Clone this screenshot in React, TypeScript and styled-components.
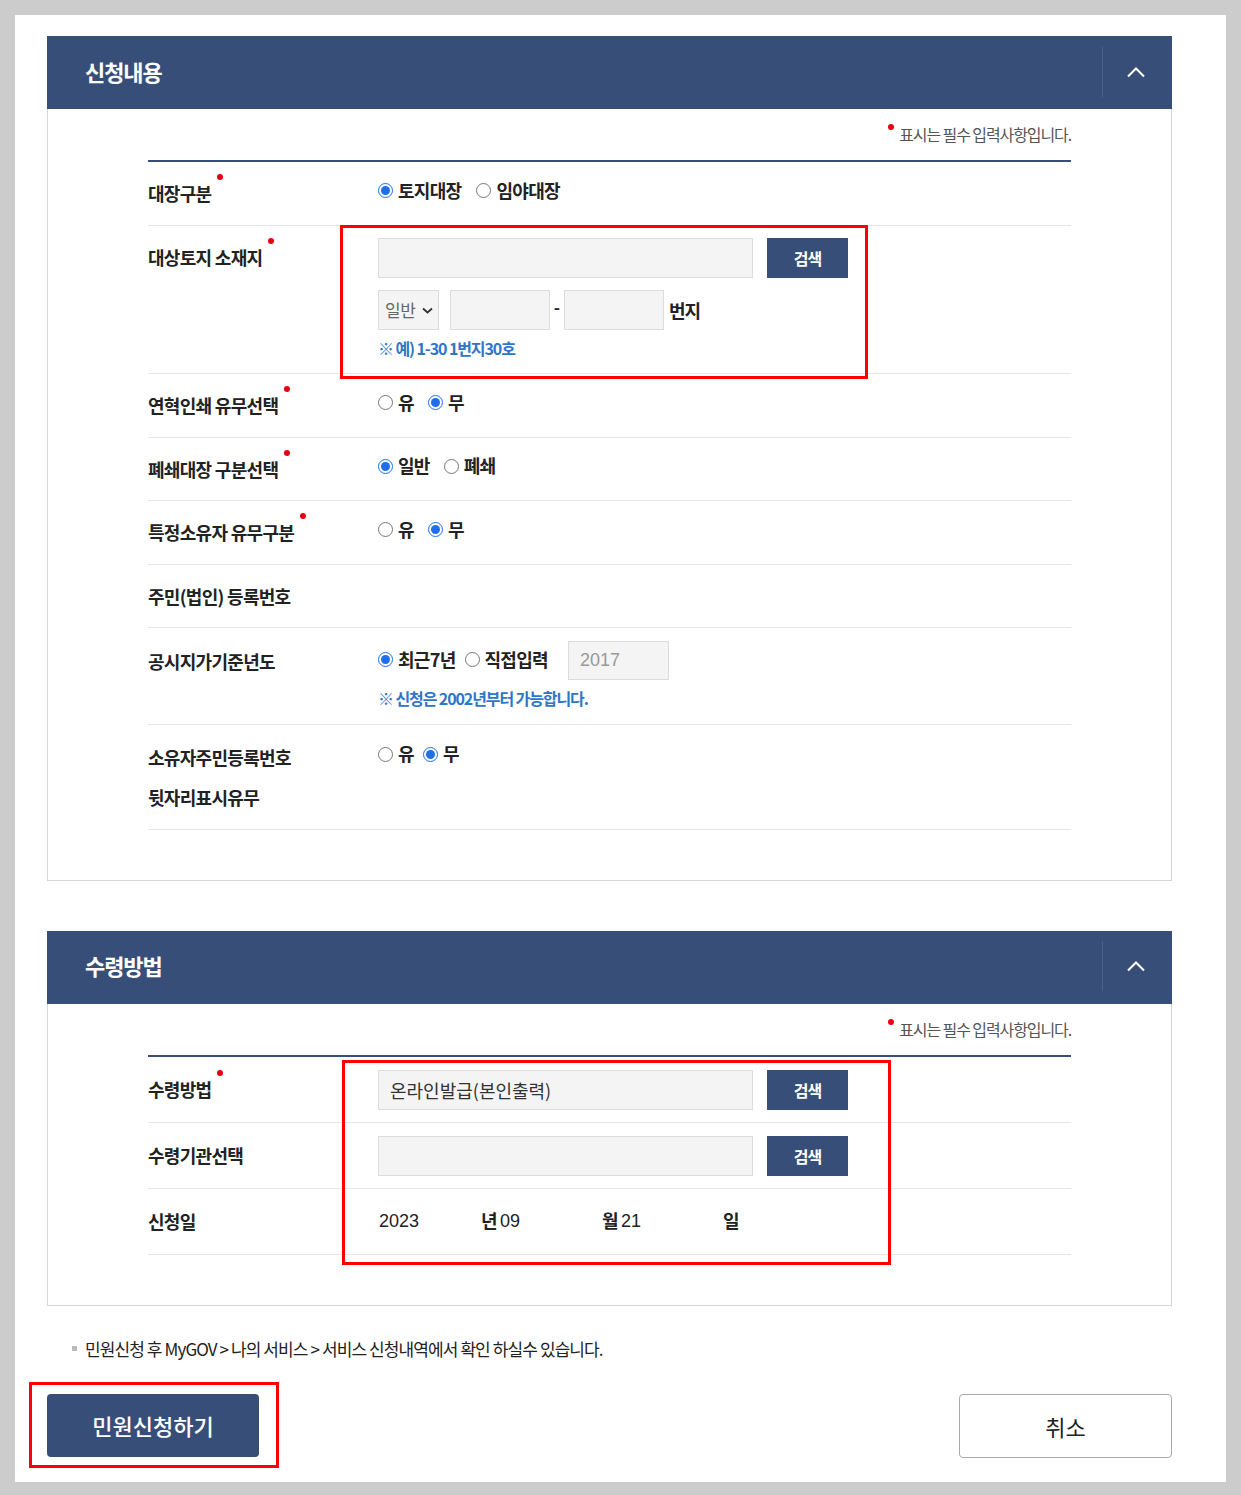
import React from "react";
import styled, { createGlobalStyle } from "styled-components";

const NAVY = "#374f78";
const FONT = `"Noto Sans CJK KR", "Noto Sans", sans-serif`;
const LATIN = `"Liberation Sans", "Noto Sans CJK KR", sans-serif`;

const GlobalStyle = createGlobalStyle`
  html, body {
    margin: 0;
    padding: 0;
    background: #cccccc;
  }
  body {
    font-family: ${FONT};
    color: #222;
  }
  * {
    box-sizing: border-box;
  }
`;

const ChevronUp = () => (
  <svg width="20" height="12" viewBox="0 0 20 12" fill="none">
    <polyline points="2,10.5 10,2.5 18,10.5" stroke="#fff" strokeWidth="2" />
  </svg>
);

const ChevronDown = () => (
  <svg width="11" height="7" viewBox="0 0 11 7" fill="none">
    <polyline points="1,1.5 5.5,5.5 10,1.5" stroke="#333" strokeWidth="1.8" />
  </svg>
);

const Required = () => <ReqDot aria-label="필수" />;

const App = () => {
  return (
    <>
      <GlobalStyle />
      <Page>
        <Section>
          <SectionHeader>
            <SectionTitle>신청내용</SectionTitle>
            <ToggleButton type="button" aria-label="접기">
              <ChevronUp />
            </ToggleButton>
          </SectionHeader>
          <SectionBody>
            <RequiredNote>
              <Required />
              표시는 필수 입력사항입니다.
            </RequiredNote>
            <FormTable>
              <Row>
                <Label>
                  대장구분
                  <Required />
                </Label>
                <Value>
                  <RadioGroup>
                    <RadioLabel>
                      <Radio name="ledger" defaultChecked />
                      토지대장
                    </RadioLabel>
                    <RadioLabel>
                      <Radio name="ledger" />
                      임야대장
                    </RadioLabel>
                  </RadioGroup>
                </Value>
              </Row>

              <Row>
                <Label>
                  대상토지 소재지
                  <Required />
                </Label>
                <Value>
                  <Line>
                    <TextInput $w={375} />
                    <SearchButton type="button">검색</SearchButton>
                  </Line>
                  <Line $top={12}>
                    <SelectBox>
                      <Select defaultValue="일반">
                        <option>일반</option>
                        <option>산</option>
                      </Select>
                      <SelectIcon>
                        <ChevronDown />
                      </SelectIcon>
                    </SelectBox>
                    <TextInput $w={100} $left={11} />
                    <Dash>-</Dash>
                    <TextInput $w={100} />
                    <Unit>번지</Unit>
                  </Line>
                  <Hint>※ 예) 1-30 1번지30호</Hint>
                </Value>
                <Highlight $left={192} $top={-1} $w={528} $h={154} />
              </Row>

              <Row>
                <Label>
                  연혁인쇄 유무선택
                  <Required />
                </Label>
                <Value>
                  <RadioGroup $gap={14}>
                    <RadioLabel>
                      <Radio name="history" />유
                    </RadioLabel>
                    <RadioLabel>
                      <Radio name="history" defaultChecked />무
                    </RadioLabel>
                  </RadioGroup>
                </Value>
              </Row>

              <Row>
                <Label>
                  폐쇄대장 구분선택
                  <Required />
                </Label>
                <Value>
                  <RadioGroup $gap={14}>
                    <RadioLabel>
                      <Radio name="closed" defaultChecked />
                      일반
                    </RadioLabel>
                    <RadioLabel>
                      <Radio name="closed" />
                      폐쇄
                    </RadioLabel>
                  </RadioGroup>
                </Value>
              </Row>

              <Row>
                <Label>
                  특정소유자 유무구분
                  <Required />
                </Label>
                <Value>
                  <RadioGroup $gap={14}>
                    <RadioLabel>
                      <Radio name="owner" />유
                    </RadioLabel>
                    <RadioLabel>
                      <Radio name="owner" defaultChecked />무
                    </RadioLabel>
                  </RadioGroup>
                </Value>
              </Row>

              <Row>
                <Label>주민(법인) 등록번호</Label>
                <Value />
              </Row>

              <Row>
                <Label $drop={2}>공시지가기준년도</Label>
                <Value>
                  <Line>
                    <RadioGroup $gap={9} $pb={3}>
                      <RadioLabel>
                        <Radio name="year" defaultChecked />
                        최근7년
                      </RadioLabel>
                      <RadioLabel>
                        <Radio name="year" />
                        직접입력
                      </RadioLabel>
                    </RadioGroup>
                    <YearInput defaultValue="2017" readOnly />
                  </Line>
                  <Hint>※ 신청은 2002년부터 가능합니다.</Hint>
                </Value>
              </Row>

              <Row $roomy>
                <Label>
                  소유자주민등록번호
                  <br />
                  뒷자리표시유무
                </Label>
                <Value>
                  <RadioGroup $gap={9}>
                    <RadioLabel>
                      <Radio name="rrn" />유
                    </RadioLabel>
                    <RadioLabel>
                      <Radio name="rrn" defaultChecked />무
                    </RadioLabel>
                  </RadioGroup>
                </Value>
              </Row>
            </FormTable>
          </SectionBody>
        </Section>

        <Section>
          <SectionHeader>
            <SectionTitle>수령방법</SectionTitle>
            <ToggleButton type="button" aria-label="접기">
              <ChevronUp />
            </ToggleButton>
          </SectionHeader>
          <SectionBody>
            <RequiredNote>
              <Required />
              표시는 필수 입력사항입니다.
            </RequiredNote>
            <FormTable>
              <Row $roomy>
                <Label>
                  수령방법
                  <Required />
                </Label>
                <Value>
                  <Line>
                    <TextInput $w={375} defaultValue="온라인발급(본인출력)" readOnly />
                    <SearchButton type="button">검색</SearchButton>
                  </Line>
                </Value>
              </Row>
              <Row $roomy>
                <Label>수령기관선택</Label>
                <Value>
                  <Line>
                    <TextInput $w={375} />
                    <SearchButton type="button">검색</SearchButton>
                  </Line>
                </Value>
              </Row>
              <Row $roomy>
                <Label>신청일</Label>
                <Value>
                  <Line>
                    <DateValue>2023</DateValue>
                    <DateUnit>년</DateUnit>
                    <DateValue>09</DateValue>
                    <DateUnit>월</DateUnit>
                    <DateValue>21</DateValue>
                    <DateUnit>일</DateUnit>
                  </Line>
                </Value>
              </Row>
              <Highlight $left={194} $top={3} $w={549} $h={205} />
            </FormTable>
          </SectionBody>
        </Section>

        <Notice>
          <Bullet />
          민원신청 후 MyGOV &gt; 나의 서비스 &gt; 서비스 신청내역에서 확인 하실수 있습니다.
        </Notice>

        <Actions>
          <SubmitWrap>
            <SubmitButton type="button">민원신청하기</SubmitButton>
            <Highlight $left={-18} $top={-12} $w={250} $h={86} />
          </SubmitWrap>
          <CancelButton type="button">취소</CancelButton>
        </Actions>
      </Page>
    </>
  );
};

const Page = styled.div`
  margin: 15px;
  background: #fff;
  padding: 21px 54px 24px 32px;
`;

const Section = styled.section`
  & + & {
    margin-top: 50px;
  }
`;

const SectionHeader = styled.div`
  display: flex;
  align-items: center;
  height: 73px;
  padding: 0 0 2px 38px;
  background: ${NAVY};
`;

const SectionTitle = styled.h2`
  flex: 1;
  margin: 0 0 2px;
  color: #fff;
  font-size: 22px;
  font-weight: 700;
  letter-spacing: -1.1px;
`;

const ToggleButton = styled.button`
  display: flex;
  align-items: center;
  justify-content: center;
  width: 70px;
  height: 50px;
  padding: 0 4px 0 0;
  border: 0;
  border-left: 1px solid #4b6189;
  background: transparent;
  cursor: pointer;
`;

const SectionBody = styled.div`
  padding: 14px 100px 50px 100px;
  border: 1px solid #d6d6d6;
  border-top: 0;
`;

const RequiredNote = styled.p`
  margin: 0 0 15px;
  text-align: right;
  font-size: 16px;
  line-height: 22px;
  letter-spacing: -1.1px;
  color: #555;
`;

const ReqDot = styled.span`
  display: inline-block;
  width: 6px;
  height: 6px;
  margin: 1px 5px 0 6px;
  border-radius: 50%;
  background: #e60012;
  vertical-align: top;
`;

const FormTable = styled.div`
  position: relative;
  border-top: 2px solid ${NAVY};
`;

const Row = styled.div<{ $roomy?: boolean }>`
  position: relative;
  display: flex;
  padding: ${(p) => (p.$roomy ? "13px 0 12px" : "12px 0 10.5px")};
  border-bottom: 1px solid #e6e6e6;
`;

const Label = styled.div<{ $drop?: number }>`
  flex: 0 0 230px;
  margin-top: ${(p) => (p.$drop ?? 0) - 1}px;
  font-size: 18px;
  font-weight: 700;
  line-height: 40px;
  letter-spacing: -0.7px;
  color: #222;
`;

const Value = styled.div`
  flex: 1;
  display: flex;
  flex-direction: column;
  min-height: 40px;
`;

const Line = styled.div<{ $top?: number }>`
  display: flex;
  align-items: center;
  height: 40px;
  margin-top: ${(p) => p.$top ?? 0}px;
`;

const RadioGroup = styled.div<{ $gap?: number; $pb?: number }>`
  display: flex;
  align-items: center;
  gap: ${(p) => p.$gap ?? 15}px;
  height: 40px;
  padding-bottom: ${(p) => p.$pb ?? 9}px;
`;

const RadioLabel = styled.label`
  display: inline-flex;
  align-items: center;
  gap: 5px;
  font-size: 18px;
  font-weight: 700;
  letter-spacing: -0.7px;
  cursor: pointer;
`;

const Radio = styled.input.attrs({ type: "radio" })`
  width: 15px;
  height: 15px;
  margin: 2px 0 0;
  accent-color: #1f6fea;
`;

const TextInput = styled.input.attrs({ type: "text" })<{ $w: number; $left?: number }>`
  width: ${(p) => p.$w}px;
  height: 40px;
  margin-left: ${(p) => p.$left ?? 0}px;
  padding: 0 11px;
  border: 1px solid #dcdcdc;
  background: #f4f4f4;
  font-family: ${FONT};
  font-size: 18px;
  color: #333;
  outline: none;
`;

const YearInput = styled.input.attrs({ type: "text" })`
  width: 101px;
  height: 39px;
  margin-left: 20px;
  padding: 0 11px;
  border: 1px solid #dcdcdc;
  background: #f4f4f4;
  font-family: ${LATIN};
  font-size: 18px;
  color: #999;
  outline: none;
`;

const SearchButton = styled.button`
  width: 81px;
  height: 40px;
  margin-left: 14px;
  border: 0;
  background: ${NAVY};
  color: #fff;
  font-family: ${FONT};
  font-size: 16px;
  font-weight: 700;
  letter-spacing: -1px;
  cursor: pointer;
`;

const SelectBox = styled.div`
  position: relative;
  width: 61px;
  height: 40px;
`;

const Select = styled.select`
  width: 100%;
  height: 100%;
  padding: 0 0 0 6px;
  appearance: none;
  border: 1px solid #dcdcdc;
  border-radius: 0;
  background: #f4f4f4;
  font-family: ${FONT};
  font-size: 17px;
  letter-spacing: -0.5px;
  color: #666;
  outline: none;
`;

const SelectIcon = styled.span`
  position: absolute;
  top: 17px;
  right: 6px;
  display: flex;
  pointer-events: none;
`;

const Dash = styled.span`
  width: 14px;
  text-align: center;
  font-size: 17px;
  font-weight: 700;
  margin-top: -6px;
`;

const Unit = styled.span`
  margin-left: 5px;
  font-size: 18px;
  font-weight: 700;
  letter-spacing: -1px;
`;

const Hint = styled.p`
  margin: 6px 0 3px;
  font-size: 16px;
  font-weight: 700;
  line-height: 24px;
  letter-spacing: -1.1px;
  color: #2f76c9;
`;

const DateValue = styled.span`
  width: 103px;
  padding-left: 1px;
  font-family: ${LATIN};
  font-size: 18px;
  color: #222;
`;

const DateUnit = styled.span`
  width: 18px;
  margin-top: -4px;
  font-size: 18px;
  font-weight: 700;
`;

const Highlight = styled.div<{ $left: number; $top: number; $w: number; $h: number }>`
  position: absolute;
  left: ${(p) => p.$left}px;
  top: ${(p) => p.$top}px;
  width: ${(p) => p.$w}px;
  height: ${(p) => p.$h}px;
  border: 3px solid #ff0000;
  pointer-events: none;
`;

const Notice = styled.p`
  display: flex;
  align-items: center;
  gap: 8px;
  margin: 31px 0 0;
  padding-left: 25px;
  font-size: 17px;
  line-height: 24px;
  letter-spacing: -0.9px;
  color: #222;
`;

const Bullet = styled.span`
  width: 5px;
  height: 5px;
  background: #bbbbbb;
`;

const Actions = styled.div`
  display: flex;
  justify-content: space-between;
  align-items: flex-start;
  margin-top: 33px;
`;

const SubmitWrap = styled.div`
  position: relative;
`;

const SubmitButton = styled.button`
  display: block;
  width: 212px;
  height: 63px;
  border: 0;
  border-radius: 4px;
  background: ${NAVY};
  color: #fff;
  font-family: ${FONT};
  font-size: 22px;
  font-weight: 500;
  cursor: pointer;
`;

const CancelButton = styled.button`
  width: 213px;
  height: 64px;
  border: 1px solid #aaaaaa;
  border-radius: 4px;
  background: #fff;
  color: #222;
  font-family: ${FONT};
  font-size: 22px;
  font-weight: 400;
  cursor: pointer;
`;

export default App;
